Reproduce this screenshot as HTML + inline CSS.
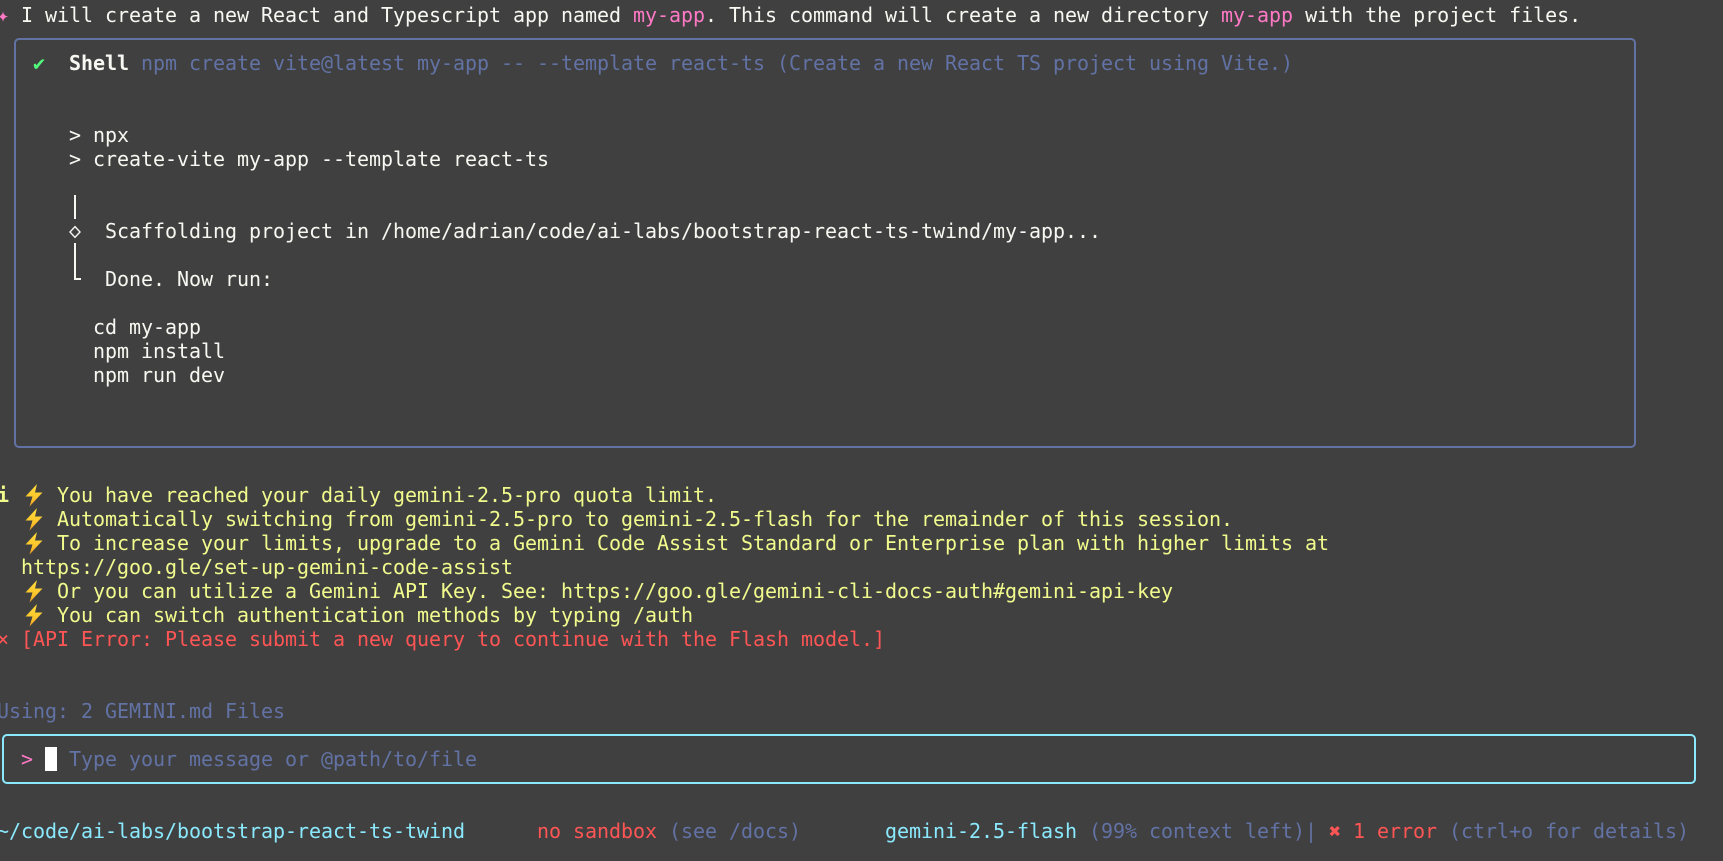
<!DOCTYPE html>
<html lang="en">
<head>
<meta charset="utf-8">
<title>Gemini CLI</title>
<style>
html,body{margin:0;padding:0;width:1723px;height:861px;overflow:hidden;background:#404040;}
body{position:relative;font-family:"DejaVu Sans Mono","Liberation Mono",monospace;font-size:20px;line-height:24px;color:#f8f8f2;letter-spacing:-0.041px;}
.l{position:absolute;white-space:pre;height:24px;line-height:24px;}
.p{color:#ff79c6}.c{color:#6272a4}.y{color:#f1fa8c}.r{color:#ff5555}.a{color:#8be9fd}.g{color:#50fa7b}
.box{position:absolute;box-sizing:border-box;border-style:solid;border-width:2px;border-radius:5px;}
.v{position:absolute;background:#f8f8f2;}
svg{position:absolute;}
</style>
</head>
<body>
<svg width="0" height="0" style="left:0;top:0"><defs><linearGradient id="b" x1="0" y1="0" x2="0" y2="1"><stop offset="0" stop-color="#ffdc3c"/><stop offset="0.6" stop-color="#fcc62d"/><stop offset="1" stop-color="#f2a020"/></linearGradient></defs></svg>
<span class="l p" style="left:-3px;top:3px">✦</span>
<span class="l" style="left:21px;top:3px">I will create a new React and Typescript app named <span class="p">my-app</span>. This command will create a new directory <span class="p">my-app</span> with the project files.</span>

<div class="box" style="left:14px;top:38px;width:1622px;height:410px;border-color:#6272a4"></div>
<span class="l g" style="left:33px;top:51px">✔</span>
<span class="l" style="left:69px;top:51px;font-weight:bold">Shell</span>
<span class="l c" style="left:141px;top:51px">npm create vite@latest my-app -- --template react-ts (Create a new React TS project using Vite.)</span>

<span class="l" style="left:69px;top:123px">&gt; npx</span>
<span class="l" style="left:69px;top:147px">&gt; create-vite my-app --template react-ts</span>

<div class="v" style="left:74px;top:195px;width:2px;height:24px"></div>
<svg style="left:68px;top:224px" width="14" height="16" viewBox="0 0 14 16"><path d="M7 2.6 12 8 7 13.4 2 8Z" fill="none" stroke="#f8f8f2" stroke-width="1.4"/></svg>
<span class="l" style="left:105px;top:219px">Scaffolding project in /home/adrian/code/ai-labs/bootstrap-react-ts-twind/my-app...</span>
<div class="v" style="left:74px;top:243px;width:2px;height:37px"></div>
<div class="v" style="left:74px;top:278px;width:7px;height:2px"></div>
<span class="l" style="left:105px;top:267px">Done. Now run:</span>

<span class="l" style="left:93px;top:315px">cd my-app</span>
<span class="l" style="left:93px;top:339px">npm install</span>
<span class="l" style="left:93px;top:363px">npm run dev</span>

<span class="l y" style="left:-3px;top:483px;font-weight:bold">i</span>
<svg style="left:25px;top:484px" width="18" height="23" viewBox="0 0 18 23"><path d="M12 0 0.5 12.5 7.5 12.5 4.5 22.5 17.5 8.5 10 8.5Z" fill="url(#b)"/></svg>
<span class="l y" style="left:57px;top:483px">You have reached your daily gemini-2.5-pro quota limit.</span>
<svg style="left:25px;top:508px" width="18" height="23" viewBox="0 0 18 23"><path d="M12 0 0.5 12.5 7.5 12.5 4.5 22.5 17.5 8.5 10 8.5Z" fill="url(#b)"/></svg>
<span class="l y" style="left:57px;top:507px">Automatically switching from gemini-2.5-pro to gemini-2.5-flash for the remainder of this session.</span>
<svg style="left:25px;top:532px" width="18" height="23" viewBox="0 0 18 23"><path d="M12 0 0.5 12.5 7.5 12.5 4.5 22.5 17.5 8.5 10 8.5Z" fill="url(#b)"/></svg>
<span class="l y" style="left:57px;top:531px">To increase your limits, upgrade to a Gemini Code Assist Standard or Enterprise plan with higher limits at</span>
<span class="l y" style="left:21px;top:555px">https://goo.gle/set-up-gemini-code-assist</span>
<svg style="left:25px;top:580px" width="18" height="23" viewBox="0 0 18 23"><path d="M12 0 0.5 12.5 7.5 12.5 4.5 22.5 17.5 8.5 10 8.5Z" fill="url(#b)"/></svg>
<span class="l y" style="left:57px;top:579px">Or you can utilize a Gemini API Key. See: https://goo.gle/gemini-cli-docs-auth#gemini-api-key</span>
<svg style="left:25px;top:604px" width="18" height="23" viewBox="0 0 18 23"><path d="M12 0 0.5 12.5 7.5 12.5 4.5 22.5 17.5 8.5 10 8.5Z" fill="url(#b)"/></svg>
<span class="l y" style="left:57px;top:603px">You can switch authentication methods by typing /auth</span>
<span class="l r" style="left:-3px;top:627px">×</span>
<span class="l r" style="left:21px;top:627px">[API Error: Please submit a new query to continue with the Flash model.]</span>

<span class="l c" style="left:-3px;top:699px">Using: 2 GEMINI.md Files</span>

<div class="box" style="left:2px;top:734px;width:1694px;height:50px;border-color:#8be9fd"></div>
<span class="l p" style="left:21px;top:747px">&gt;</span>
<div class="v" style="left:45px;top:747px;width:12px;height:24px;background:#fff"></div>
<span class="l c" style="left:69px;top:747px">Type your message or @path/to/file</span>

<span class="l a" style="left:-3px;top:819px">~/code/ai-labs/bootstrap-react-ts-twind</span>
<span class="l r" style="left:537px;top:819px">no sandbox</span>
<span class="l c" style="left:669px;top:819px">(see /docs)</span>
<span class="l a" style="left:885px;top:819px">gemini-2.5-flash</span>
<span class="l c" style="left:1089px;top:819px">(99% context left)|</span>
<span class="l r" style="left:1329px;top:819px">✖</span>
<span class="l r" style="left:1353px;top:819px">1 error</span>
<span class="l c" style="left:1449px;top:819px">(ctrl+o for details)</span>
</body>
</html>
